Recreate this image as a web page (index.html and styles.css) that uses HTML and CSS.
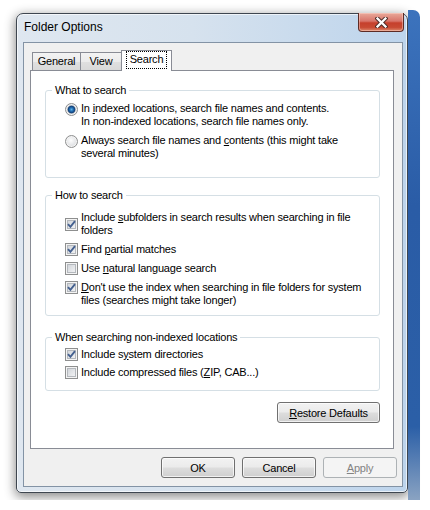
FILE: index.html
```html
<!DOCTYPE html>
<html lang="en">
<head>
    <meta charset="UTF-8">
    <meta name="viewport" content="width=device-width, initial-scale=1.0">
    <title>Folder Options</title>
    <link rel="stylesheet" href="styles.css">
</head>
<body>
    <div class="desk">
        <div class="window">
            <div class="titlebar">
                <span class="title">Folder Options</span>
                <span class="close">
                    <svg width="13" height="11" viewBox="0 0 13 11">
                        <path d="M2.5 1.5 L10.5 9.5 M10.5 1.5 L2.5 9.5" stroke="#4a2a26" stroke-width="4.2" stroke-linecap="square"/>
                        <path d="M2.5 1.5 L10.5 9.5 M10.5 1.5 L2.5 9.5" stroke="#fff" stroke-width="2.3" stroke-linecap="square"/>
                    </svg>
                </span>
            </div>

            <div class="client">
                <div class="tabs">
                    <span class="tab first">General</span>
                    <span class="tab">View</span>
                    <span class="tab active"><span class="focus">Search</span></span>
                </div>

                <div class="panel">
                    <fieldset class="group g1">
                        <legend>What to search</legend>
                        <div class="opts">
                            <div class="opt">
                                <span class="radio on"></span>
                                <span>In <u>i</u>ndexed locations, search file names and contents.<br>In non-indexed locations, search file names only.</span>
                            </div>
                            <div class="opt">
                                <span class="radio"></span>
                                <span>Always search file names and <u>c</u>ontents (this might take<br>several minutes)</span>
                            </div>
                        </div>
                    </fieldset>

                    <fieldset class="group g2">
                        <legend>How to search</legend>
                        <div class="opts">
                            <div class="opt mid">
                                <span class="box"><svg width="11" height="11" viewBox="0 0 11 11"><path d="M2 5.2 L4.4 7.8 L9 2.2" fill="none" stroke="#44608f" stroke-width="1.9"/></svg></span>
                                <span>Include <u>s</u>ubfolders in search results when searching in file<br>folders</span>
                            </div>
                            <div class="opt">
                                <span class="box"><svg width="11" height="11" viewBox="0 0 11 11"><path d="M2 5.2 L4.4 7.8 L9 2.2" fill="none" stroke="#44608f" stroke-width="1.9"/></svg></span>
                                <span>Find <u>p</u>artial matches</span>
                            </div>
                            <div class="opt">
                                <span class="box"></span>
                                <span>Use <u>n</u>atural language search</span>
                            </div>
                            <div class="opt">
                                <span class="box"><svg width="11" height="11" viewBox="0 0 11 11"><path d="M2 5.2 L4.4 7.8 L9 2.2" fill="none" stroke="#44608f" stroke-width="1.9"/></svg></span>
                                <span><u>D</u>on't use the index when searching in file folders for system<br>files (searches might take longer)</span>
                            </div>
                        </div>
                    </fieldset>

                    <fieldset class="group g3">
                        <legend>When searching non-indexed locations</legend>
                        <div class="opts">
                            <div class="opt">
                                <span class="box"><svg width="11" height="11" viewBox="0 0 11 11"><path d="M2 5.2 L4.4 7.8 L9 2.2" fill="none" stroke="#44608f" stroke-width="1.9"/></svg></span>
                                <span>Include s<u>y</u>stem directories</span>
                            </div>
                            <div class="opt">
                                <span class="box"></span>
                                <span>Include compressed files (<u>Z</u>IP, CAB...)</span>
                            </div>
                        </div>
                    </fieldset>

                    <div class="restore-row">
                        <button type="button" class="btn restore"><u>R</u>estore Defaults</button>
                    </div>
                </div>

                <div class="actions">
                    <button type="button" class="btn">OK</button>
                    <button type="button" class="btn">Cancel</button>
                    <button type="button" class="btn" disabled><u>A</u>pply</button>
                </div>
            </div>
        </div>
        <div class="behind"></div>
    </div>
</body>
</html>
```

FILE: styles.css
```css
body {
    margin: 0;
    background: #fff;
    font-family: "Liberation Sans", Arial, sans-serif;
    font-size: 11px;
    color: #000;
}
.desk {
    display: flex;
    align-items: flex-start;
    padding: 13px 0 0 16px;
}

/* window frame */
.window {
    width: 392px;
    height: 480px;
    box-sizing: border-box;
    display: flex;
    flex-direction: column;
    border: 1px solid #3e4650;
    border-radius: 7px 7px 5px 5px;
    background: linear-gradient(to right, #dfe7f0 0%, #d6e2ee 45%, #bdd4ec 100%);
    box-shadow: inset 0 0 0 1px rgba(255, 255, 255, 0.65), 0 3px 11px 1px rgba(0, 0, 0, 0.45);
}
.behind {
    width: 12px;
    height: 490px;
    margin-top: -3px;
    border-radius: 0 7px 0 0;
    background: linear-gradient(to bottom, #3c73bd 0%, #2a5ca6 40%, #2b5fa7 85%, #8aa3c2 100%);
}
.titlebar {
    height: 28px;
    display: flex;
    align-items: flex-start;
    flex: none;
}
.title {
    flex: 1;
    padding: 6px 0 0 7px;
    font-size: 12px;
    line-height: 15px;
}
.close {
    width: 46px;
    height: 19px;
    margin: -1px 3px 0 0;
    box-sizing: border-box;
    display: flex;
    align-items: center;
    justify-content: center;
    border: 1px solid #5d2b25;
    border-top: none;
    border-radius: 0 0 4px 4px;
    background: linear-gradient(to bottom, #e9a99a 0%, #d8756a 45%, #c6402c 55%, #c84a33 80%, #dd8a6e 100%);
    box-shadow: inset 0 0 0 1px rgba(255, 220, 210, 0.45);
}
.close svg {
    display: block;
}

/* client area */
.client {
    flex: 1;
    margin: 0 4px 5px 6px;
    padding: 7px 5px 8px 6px;
    border: 1px solid #8393a5;
    background: #f0f0f0;
    display: flex;
    flex-direction: column;
    letter-spacing: -0.2px;
}
.tabs {
    height: 20px;
    display: flex;
    align-items: flex-end;
}
.tab {
    height: 18px;
    box-sizing: border-box;
    margin-left: -1px;
    border: 1px solid #898c95;
    border-bottom: none;
    background: linear-gradient(to bottom, #f3f3f3 0%, #ececec 50%, #e0e0e0 51%, #d9d9d9 100%);
    text-align: center;
    line-height: 17px;
    width: 42px;
}
.tab.first {
    margin-left: 2px;
    width: 49px;
}
.tab.active {
    position: relative;
    z-index: 1;
    height: 21px;
    width: 51px;
    margin-bottom: -1px;
    background: #fff;
    padding-top: 1px;
    line-height: 13px;
}
.focus {
    display: inline-block;
    padding: 1px 3px 2px;
    outline: 1px dotted #000;
}

/* tab page */
.panel {
    height: 379px;
    box-sizing: border-box;
    margin-right: 3px;
    padding: 12px 13px 0 14px;
    border: 1px solid #898c95;
    background: #fff;
}
.group {
    margin: 0;
    padding: 0 12px 0 6px;
    border: 1px solid #d5dfe5;
    border-radius: 3px;
    min-inline-size: 0;
}
.group legend {
    padding: 0 3px;
    line-height: 15px;
}
.g1 {
    padding-top: 4px;
    padding-bottom: 17px;
}
.g2 {
    margin-top: 10px;
    padding-top: 8px;
    padding-bottom: 8px;
}
.g3 {
    margin-top: 14px;
    padding-top: 3px;
    padding-bottom: 11px;
}
.opts {
    display: flex;
    flex-direction: column;
    gap: 6px;
    padding-left: 13px;
}
.g3 .opts {
    gap: 5px;
}
.opt {
    display: flex;
    align-items: flex-start;
    gap: 3px;
    line-height: 13px;
    white-space: nowrap;
}
.opt.mid {
    align-items: center;
}

/* checkbox and radio */
.box {
    width: 13px;
    height: 13px;
    flex: none;
    box-sizing: border-box;
    border: 1px solid #8e8f8f;
    background: linear-gradient(135deg, #c9cdd3 0%, #e4e6e9 55%, #f8f8f8 100%);
    box-shadow: inset 0 0 0 1px #f4f4f4, inset 0 0 0 2px #b4b8bd;
}
.box svg {
    display: block;
}
.radio {
    width: 13px;
    height: 13px;
    flex: none;
    margin-top: 1px;
    box-sizing: border-box;
    border: 1px solid #8e8f8f;
    border-radius: 50%;
    background: radial-gradient(circle at 45% 40%, #fdfdfd 0%, #e6e7e9 50%, #cfd2d6 100%);
    box-shadow: inset 0 0 0 1px #f4f4f4;
}
.radio.on {
    background: radial-gradient(circle at 50% 50%, #5fb2e8 0, #226fb3 1.8px, #123f78 3.4px, #b9bec4 4.2px, #dfe1e4 5.5px);
}

/* buttons */
.btn {
    height: 21px;
    width: 74px;
    padding: 0;
    box-sizing: border-box;
    border: 1px solid #707070;
    border-radius: 3px;
    background: linear-gradient(to bottom, #f2f2f2 0%, #ebebeb 48%, #dddddd 52%, #cfcfcf 100%);
    box-shadow: inset 0 0 0 1px rgba(255, 255, 255, 0.7);
    font-family: inherit;
    font-size: 11px;
    letter-spacing: inherit;
    color: #000;
}
.btn:disabled {
    border-color: #adb2b5;
    background: #f4f4f4;
    box-shadow: none;
    color: #838383;
}
.restore-row {
    display: flex;
    justify-content: flex-end;
    margin-top: 11px;
}
.btn.restore {
    width: 103px;
}
.actions {
    display: flex;
    justify-content: flex-end;
    gap: 7px;
    margin-top: 8px;
}
```
